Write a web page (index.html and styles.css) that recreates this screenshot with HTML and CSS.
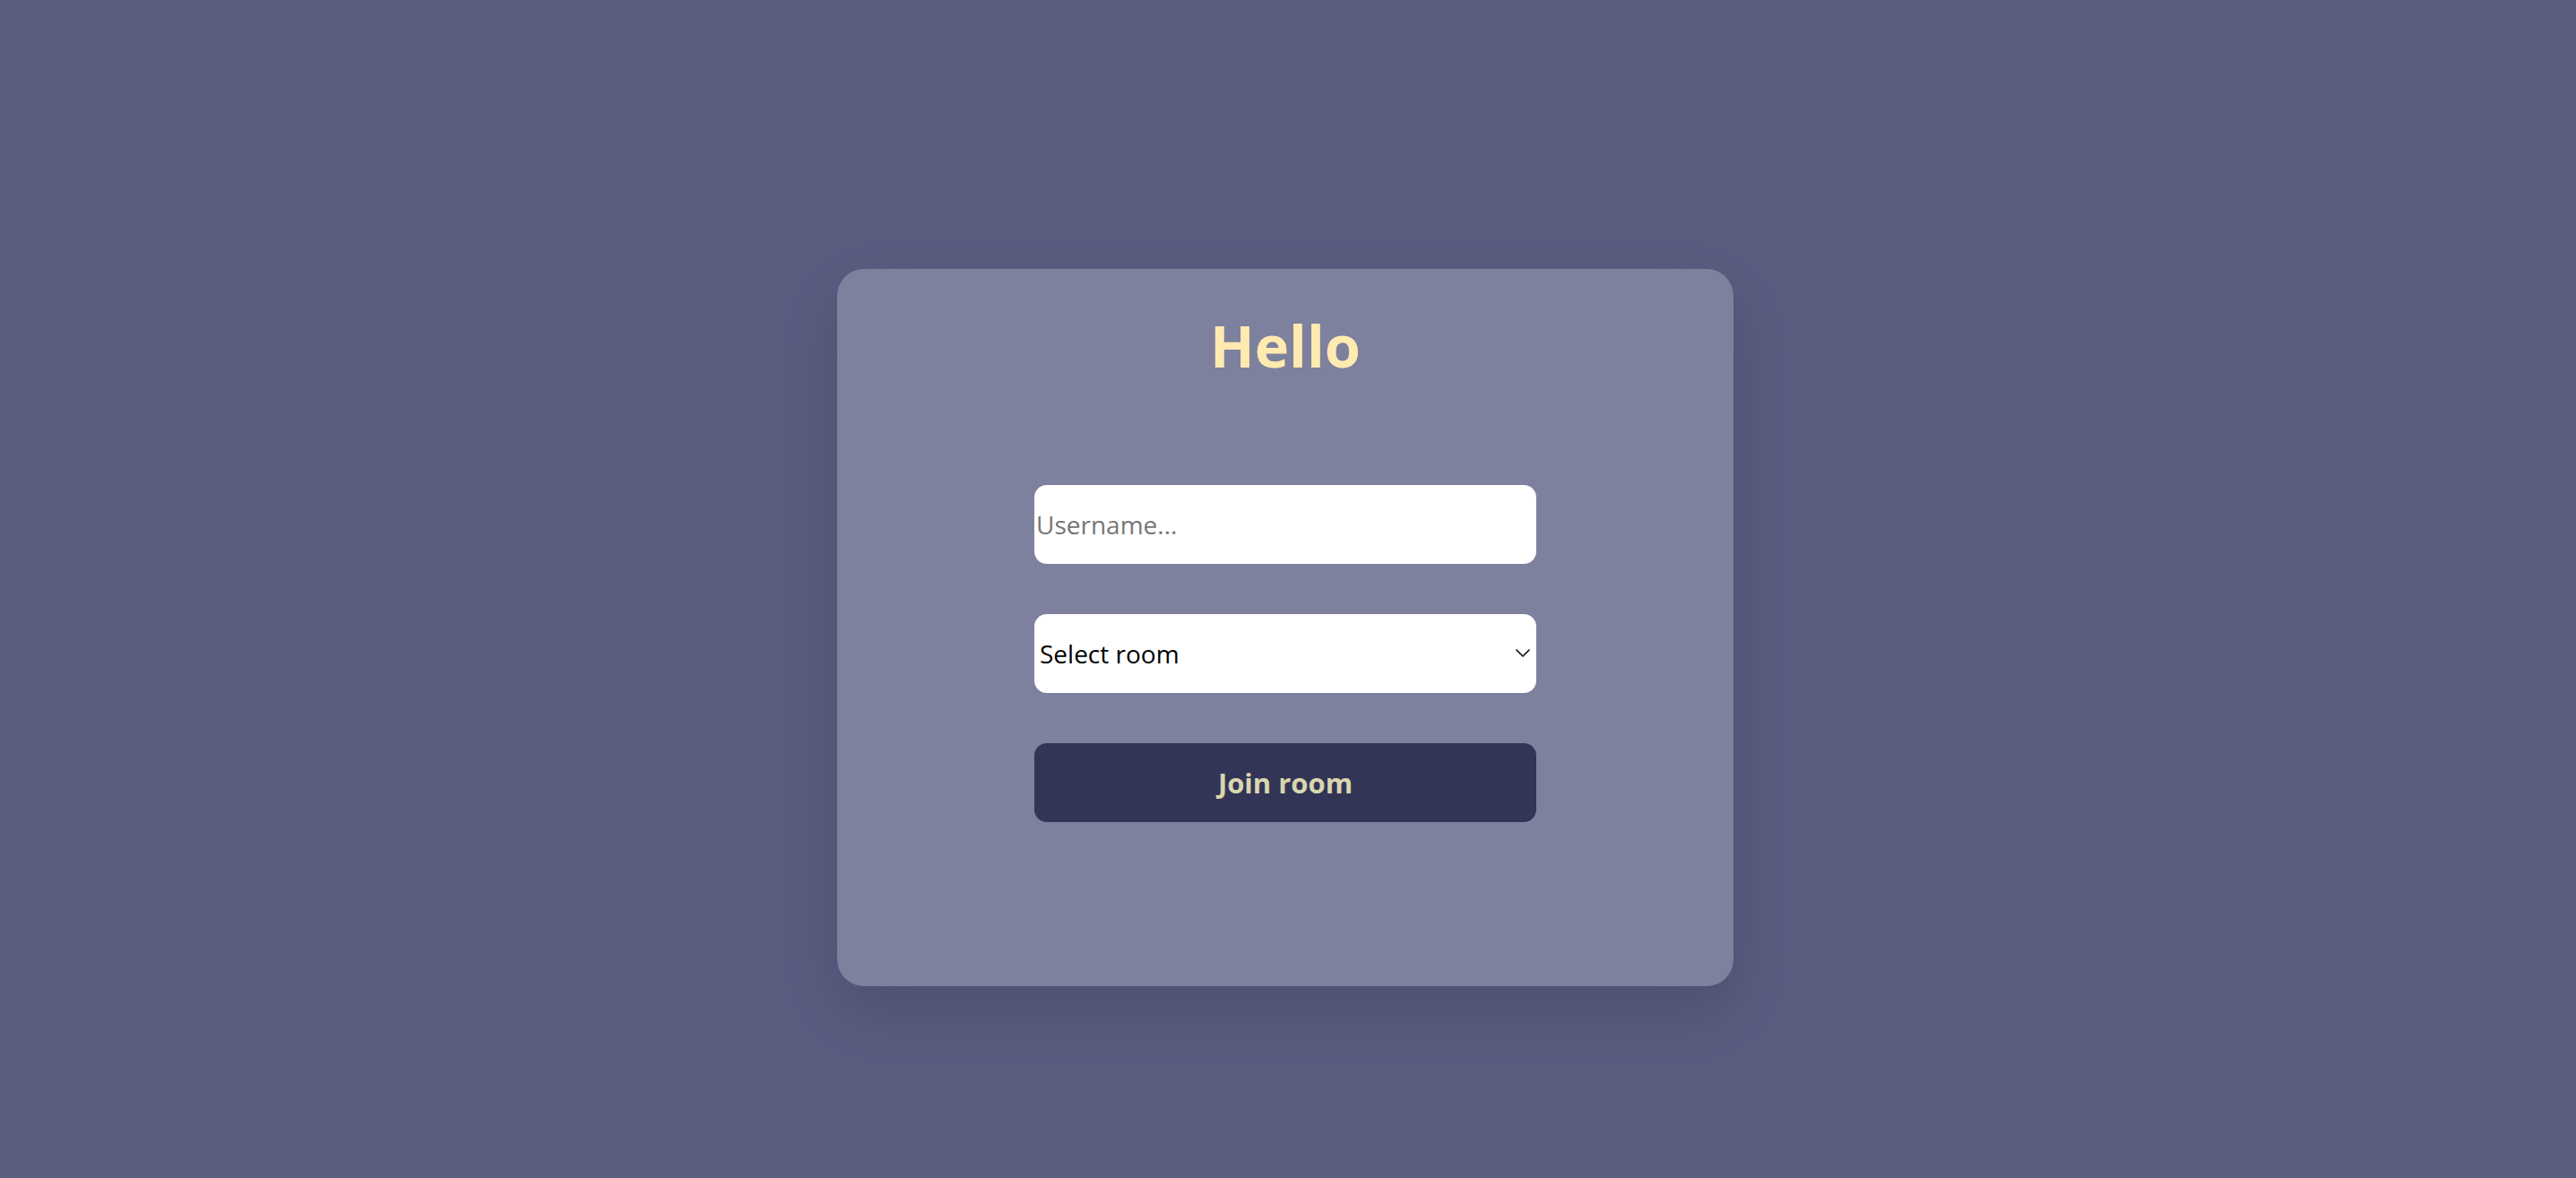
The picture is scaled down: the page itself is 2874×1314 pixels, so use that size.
FILE: index.html
```html
<!DOCTYPE html>
<html lang="en">
<head>
<meta charset="utf-8">
<title>Hello</title>
<link rel="stylesheet" href="styles.css">
</head>
<body>
<main class="card">
  <h1 class="title">Hello</h1>
  <form class="form">
    <input class="field" type="text" placeholder="Username...">
    <div class="select-wrap">
      <select class="field select">
        <option>Select room</option>
      </select>
      <svg class="chevron" viewBox="0 0 16 9" width="16" height="9" aria-hidden="true">
        <path d="M1 1 L8 8 L15 1" fill="none" stroke="#111" stroke-width="1.7" stroke-linecap="round" stroke-linejoin="round"/>
      </svg>
    </div>
    <button class="join" type="button">Join room</button>
  </form>
</main>
</body>
</html>
```

FILE: styles.css
```css
html, body {
  margin: 0;
  padding: 0;
}

body {
  min-height: 100vh;
  background: #5b5d81;
  font-family: "Open Sans", "Noto Sans", sans-serif;
  padding: 300px 6px 0 0;
  box-sizing: border-box;
  overflow: hidden;
}

.card {
  width: 1000px;
  height: 800px;
  margin: 0 auto;
  background: #7e819d;
  border-radius: 30px;
  box-shadow: 0 28px 70px rgba(40, 42, 70, 0.28);
  padding-top: 40px;
  box-sizing: border-box;
  display: flex;
  flex-direction: column;
  align-items: center;
}

.title {
  margin: 0;
  font-size: 65px;
  font-weight: 700;
  line-height: 90px;
  color: #ffeab0;
}

.form {
  margin-top: 111px;
  width: 560px;
  display: flex;
  flex-direction: column;
  gap: 56px;
}

.field {
  display: block;
  width: 100%;
  height: 88px;
  border: none;
  border-radius: 14px;
  background: #ffffff;
  font-family: "Open Sans", "Noto Sans", sans-serif;
  font-size: 28px;
  color: #000;
  padding: 0 2px;
  box-sizing: border-box;
  outline: none;
}

.field::placeholder {
  color: #767676;
}

.select-wrap {
  position: relative;
}

.select {
  appearance: none;
  -webkit-appearance: none;
  padding: 0 40px 0 6px;
}

.chevron {
  position: absolute;
  right: 7px;
  top: 39px;
  width: 16px;
  height: 9px;
  pointer-events: none;
}

.join {
  display: block;
  width: 100%;
  height: 88px;
  border: none;
  border-radius: 14px;
  background: #333556;
  color: #d9d6ae;
  font-family: "Open Sans", "Noto Sans", sans-serif;
  font-size: 31px;
  font-weight: 700;
  cursor: pointer;
}
```
